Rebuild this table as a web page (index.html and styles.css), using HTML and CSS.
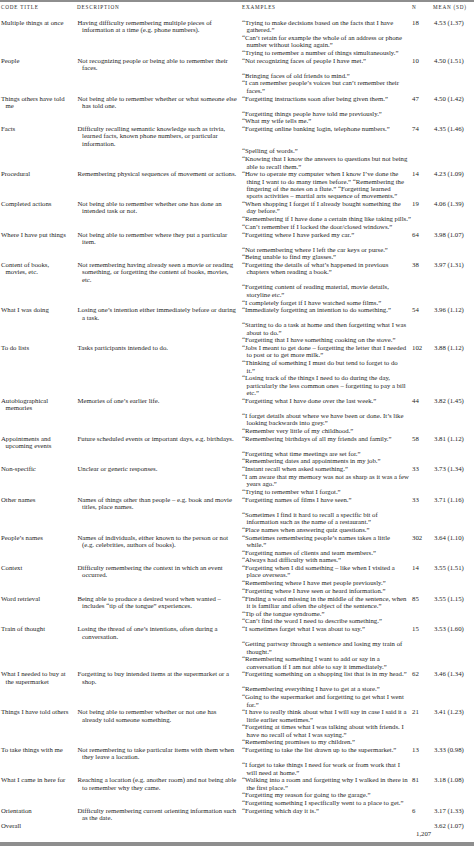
FILE: index.html
```html
<!DOCTYPE html>
<html lang="en">
<head>
<meta charset="utf-8">
<title>Memory complaint codes</title>
<link rel="stylesheet" href="styles.css">
</head>
<body>
<div class="sheet">
<table class="codes">
<colgroup>
<col class="c-title"><col class="c-desc"><col class="c-ex"><col class="c-n"><col class="c-mean">
</colgroup>
<thead>
<tr><th>Code title</th><th>Description</th><th>Examples</th><th>N</th><th>Mean (SD)</th></tr>
</thead>
<tbody>
<tr><td>Multiple things at once</td><td>Having difficulty remembering multiple pieces of<br>information at a time (e.g. phone numbers).</td><td>“Trying to make decisions based on the facts that I have<br>gathered.”</td><td>18</td><td>4.53 (1.37)</td></tr>
<tr><td></td><td></td><td>“Can’t retain for example the whole of an address or phone<br>number without looking again.”</td><td></td><td></td></tr>
<tr><td></td><td></td><td>“Trying to remember a number of things simultaneously.”</td><td></td><td></td></tr>

<tr><td>People</td><td>Not recognizing people or being able to remember their<br>faces.</td><td>“Not recognizing faces of people I have met.”</td><td>10</td><td>4.50 (1.51)</td></tr>
<tr><td></td><td></td><td>“Bringing faces of old friends to mind.”</td><td></td><td></td></tr>
<tr><td></td><td></td><td>“I can remember people’s voices but can’t remember their<br>faces.”</td><td></td><td></td></tr>

<tr><td>Things others have told<br>me</td><td>Not being able to remember whether or what someone else<br>has told one.</td><td>“Forgetting instructions soon after being given them.”</td><td>47</td><td>4.50 (1.42)</td></tr>
<tr><td></td><td></td><td>“Forgetting things people have told me previously.”</td><td></td><td></td></tr>
<tr><td></td><td></td><td>“What my wife tells me.”</td><td></td><td></td></tr>

<tr><td>Facts</td><td>Difficulty recalling semantic knowledge such as trivia,<br>learned facts, known phone numbers, or particular<br>information.</td><td>“Forgetting online banking login, telephone numbers.”</td><td>74</td><td>4.35 (1.46)</td></tr>
<tr><td></td><td></td><td>“Spelling of words.”</td><td></td><td></td></tr>
<tr><td></td><td></td><td>“Knowing that I know the answers to questions but not being<br>able to recall them.”</td><td></td><td></td></tr>

<tr><td>Procedural</td><td>Remembering physical sequences of movement or actions.</td><td>“How to operate my computer when I know I’ve done the<br>thing I want to do many times before.” “Remembering the<br>fingering of the notes on a flute.” “Forgetting learned<br>sports activities – martial arts sequence of movements.”</td><td>14</td><td>4.23 (1.09)</td></tr>

<tr><td>Completed actions</td><td>Not being able to remember whether one has done an<br>intended task or not.</td><td>“When shopping I forget if I already bought something the<br>day before.”</td><td>19</td><td>4.06 (1.39)</td></tr>
<tr><td></td><td></td><td>“Remembering if I have done a certain thing like taking pills.”</td><td></td><td></td></tr>
<tr><td></td><td></td><td>“Can’t remember if I locked the door/closed windows.”</td><td></td><td></td></tr>

<tr><td>Where I have put things</td><td>Not being able to remember where they put a particular<br>item.</td><td>“Forgetting where I have parked my car.”</td><td>64</td><td>3.98 (1.07)</td></tr>
<tr><td></td><td></td><td>“Not remembering where I left the car keys or purse.”</td><td></td><td></td></tr>
<tr><td></td><td></td><td>“Being unable to find my glasses.”</td><td></td><td></td></tr>

<tr><td>Content of books,<br>movies, etc.</td><td>Not remembering having already seen a movie or reading<br>something, or forgetting the content of books, movies,<br>etc.</td><td>“Forgetting the details of what’s happened in previous<br>chapters when reading a book.”</td><td>38</td><td>3.97 (1.31)</td></tr>
<tr><td></td><td></td><td>“Forgetting content of reading material, movie details,<br>storyline etc.”</td><td></td><td></td></tr>
<tr><td></td><td></td><td>“I completely forget if I have watched some films.”</td><td></td><td></td></tr>

<tr><td>What I was doing</td><td>Losing one’s intention either immediately before or during<br>a task.</td><td>“Immediately forgetting an intention to do something.”</td><td>54</td><td>3.96 (1.12)</td></tr>
<tr><td></td><td></td><td>“Starting to do a task at home and then forgetting what I was<br>about to do.”</td><td></td><td></td></tr>
<tr><td></td><td></td><td>“Forgetting that I have something cooking on the stove.”</td><td></td><td></td></tr>

<tr><td>To do lists</td><td>Tasks participants intended to do.</td><td>“Jobs I meant to get done – forgetting the letter that I needed<br>to post or to get more milk.”</td><td>102</td><td>3.88 (1.12)</td></tr>
<tr><td></td><td></td><td>“Thinking of something I must do but tend to forget to do<br>it.”</td><td></td><td></td></tr>
<tr><td></td><td></td><td>“Losing track of the things I need to do during the day,<br>particularly the less common ones – forgetting to pay a bill<br>etc.”</td><td></td><td></td></tr>

<tr><td>Autobiographical<br>memories</td><td>Memories of one’s earlier life.</td><td>“Forgetting what I have done over the last week.”</td><td>44</td><td>3.82 (1.45)</td></tr>
<tr><td></td><td></td><td>“I forget details about where we have been or done. It’s like<br>looking backwards into grey.”</td><td></td><td></td></tr>
<tr><td></td><td></td><td>“Remember very little of my childhood.”</td><td></td><td></td></tr>

<tr><td>Appointments and<br>upcoming events</td><td>Future scheduled events or important days, e.g. birthdays.</td><td>“Remembering birthdays of all my friends and family.”</td><td>58</td><td>3.81 (1.12)</td></tr>
<tr><td></td><td></td><td>“Forgetting what time meetings are set for.”</td><td></td><td></td></tr>
<tr><td></td><td></td><td>“Remembering dates and appointments in my job.”</td><td></td><td></td></tr>

<tr><td>Non-specific</td><td>Unclear or generic responses.</td><td>“Instant recall when asked something.”</td><td>33</td><td>3.73 (1.34)</td></tr>
<tr><td></td><td></td><td>“I am aware that my memory was not as sharp as it was a few<br>years ago.”</td><td></td><td></td></tr>
<tr><td></td><td></td><td>“Trying to remember what I forgot.”</td><td></td><td></td></tr>

<tr><td>Other names</td><td>Names of things other than people – e.g. book and movie<br>titles, place names.</td><td>“Forgetting names of films I have seen.”</td><td>33</td><td>3.71 (1.16)</td></tr>
<tr><td></td><td></td><td>“Sometimes I find it hard to recall a specific bit of<br>information such as the name of a restaurant.”</td><td></td><td></td></tr>
<tr><td></td><td></td><td>“Place names when answering quiz questions.”</td><td></td><td></td></tr>

<tr><td>People’s names</td><td>Names of individuals, either known to the person or not<br>(e.g. celebrities, authors of books).</td><td>“Sometimes remembering people’s names takes a little<br>while.”</td><td>302</td><td>3.64 (1.10)</td></tr>
<tr><td></td><td></td><td>“Forgetting names of clients and team members.”</td><td></td><td></td></tr>
<tr><td></td><td></td><td>“Always had difficulty with names.”</td><td></td><td></td></tr>

<tr><td>Context</td><td>Difficulty remembering the context in which an event<br>occurred.</td><td>“Forgetting when I did something – like when I visited a<br>place overseas.”</td><td>14</td><td>3.55 (1.51)</td></tr>
<tr><td></td><td></td><td>“Remembering where I have met people previously.”</td><td></td><td></td></tr>
<tr><td></td><td></td><td>“Forgetting where I have seen or heard information.”</td><td></td><td></td></tr>

<tr><td>Word retrieval</td><td>Being able to produce a desired word when wanted –<br>includes “tip of the tongue” experiences.</td><td>“Finding a word missing in the middle of the sentence, when<br>it is familiar and often the object of the sentence.”</td><td>85</td><td>3.55 (1.15)</td></tr>
<tr><td></td><td></td><td>“Tip of the tongue syndrome.”</td><td></td><td></td></tr>
<tr><td></td><td></td><td>“Can’t find the word I need to describe something.”</td><td></td><td></td></tr>

<tr><td>Train of thought</td><td>Losing the thread of one’s intentions, often during a<br>conversation.</td><td>“I sometimes forget what I was about to say.”</td><td>15</td><td>3.53 (1.60)</td></tr>
<tr><td></td><td></td><td>“Getting partway through a sentence and losing my train of<br>thought.”</td><td></td><td></td></tr>
<tr><td></td><td></td><td>“Remembering something I want to add or say in a<br>conversation if I am not able to say it immediately.”</td><td></td><td></td></tr>

<tr><td>What I needed to buy at<br>the supermarket</td><td>Forgetting to buy intended items at the supermarket or a<br>shop.</td><td>“Forgetting something on a shopping list that is in my head.”</td><td>62</td><td>3.46 (1.34)</td></tr>
<tr><td></td><td></td><td>“Remembering everything I have to get at a store.”</td><td></td><td></td></tr>
<tr><td></td><td></td><td>“Going to the supermarket and forgetting to get what I went<br>for.”</td><td></td><td></td></tr>

<tr><td>Things I have told others</td><td>Not being able to remember whether or not one has<br>already told someone something.</td><td>“I have to really think about what I will say in case I said it a<br>little earlier sometimes.”</td><td>21</td><td>3.41 (1.23)</td></tr>
<tr><td></td><td></td><td>“Forgetting at times what I was talking about with friends. I<br>have no recall of what I was saying.”</td><td></td><td></td></tr>
<tr><td></td><td></td><td>“Remembering promises to my children.”</td><td></td><td></td></tr>

<tr><td>To take things with me</td><td>Not remembering to take particular items with them when<br>they leave a location.</td><td>“Forgetting to take the list drawn up to the supermarket.”</td><td>13</td><td>3.33 (0.98)</td></tr>
<tr><td></td><td></td><td>“I forget to take things I need for work or from work that I<br>will need at home.”</td><td></td><td></td></tr>

<tr><td>What I came in here for</td><td>Reaching a location (e.g. another room) and not being able<br>to remember why they came.</td><td>“Walking into a room and forgetting why I walked in there in<br>the first place.”</td><td>81</td><td>3.18 (1.08)</td></tr>
<tr><td></td><td></td><td>“Forgetting my reason for going to the garage.”</td><td></td><td></td></tr>
<tr><td></td><td></td><td>“Forgetting something I specifically went to a place to get.”</td><td></td><td></td></tr>

<tr><td>Orientation</td><td>Difficulty remembering current orienting information such<br>as the date.</td><td>“Forgetting which day it is.”</td><td>6</td><td>3.17 (1.33)</td></tr>

<tr><td>Overall</td><td></td><td></td><td></td><td>3.62 (1.07)</td></tr>
<tr class="total"><td></td><td></td><td></td><td>1,207</td><td></td></tr>
</tbody>
</table>
</div>
</body>
</html>
```

FILE: styles.css
```css
html, body {
  margin: 0;
  padding: 0;
  background: #ffffff;
}

.sheet {
  width: 474px;
  border-top: 2px solid #8e8e8e;
  border-bottom: 4px solid #8e8e8e;
}

.codes {
  width: 474px;
  border-collapse: collapse;
  border-spacing: 0;
  table-layout: fixed;
  font-family: "Liberation Serif", "Times New Roman", serif;
  font-size: 6.75px;
  line-height: 7.32px;
  color: #1e1e1e;
}

.c-title { width: 77px; }
.c-desc { width: 165px; }
.c-ex { width: 170px; }
.c-n { width: 21px; }
.c-mean { width: 41px; }

.codes th {
  font-weight: normal;
  text-align: left;
  text-transform: uppercase;
  font-size: 5.2px;
  letter-spacing: 0.8px;
  line-height: 7.4px;
  padding: 2px 0 7.4px 0;
  white-space: nowrap;
  color: #2a2a2a;
}

.codes th:first-child {
  padding-left: 1px;
}

.codes td {
  padding: 0 0 0.45px 0;
  vertical-align: top;
  text-align: left;
  white-space: nowrap;
}

.codes td:nth-child(1) {
  padding-left: 5.5px;
  text-indent: -4.5px;
}

.codes td:nth-child(2) {
  padding-left: 5px;
  text-indent: -4.5px;
}

.codes td:nth-child(3) {
  padding-left: 4.5px;
  text-indent: -4.5px;
}

.codes td:nth-child(5) {
  padding-left: 1px;
}

.codes .total td {
  padding-bottom: 5px;
}

.codes .total td:nth-child(4) {
  padding-left: 4px;
}
```
